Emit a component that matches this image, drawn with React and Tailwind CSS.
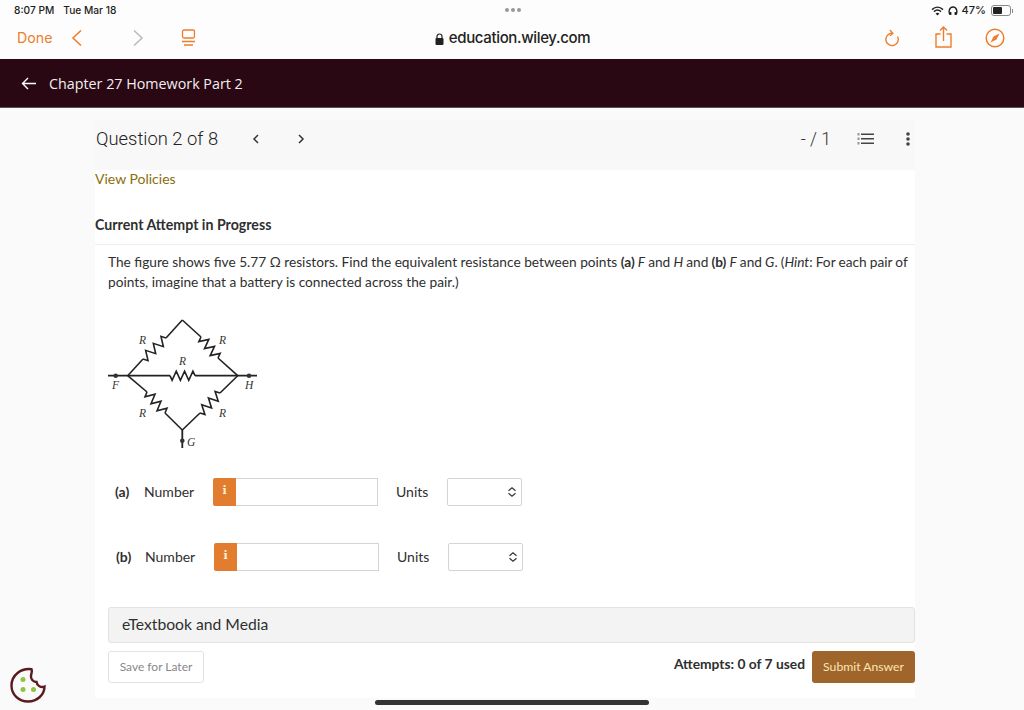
import React from "react";

const lato = "font-['Lato','Open_Sans',sans-serif]";

function Circuit() {
  const r = (x1, y1, x2, y2) => {
    const dx = x2 - x1, dy = y2 - y1;
    const len = Math.hypot(dx, dy);
    const ux = dx / len, uy = dy / len, nx = -uy, ny = ux;
    const n = 6, a = 4.6;
    let d = `M${x1} ${y1}`;
    for (let i = 0; i < n; i++) {
      const t = ((i + 0.5) / n) * len;
      const s = i % 2 ? -a : a;
      d += ` L${x1 + ux * t + nx * s} ${y1 + uy * t + ny * s}`;
    }
    return d + ` L${x2} ${y2}`;
  };
  const lbl = "font-['Liberation_Serif',serif] italic";
  return (
    <svg width="170" height="145" viewBox="0 0 170 145" fill="none" stroke="#222" strokeWidth="1.6" strokeLinejoin="miter">
      <path d="M8 65.7H70" strokeWidth="1.8" />
      <path d="M95 65.7H157" strokeWidth="1.8" />
      <path d={r(70, 65.7, 95, 65.7)} />
      <path d="M27.7 65.7L43 49" /><path d={r(43, 49, 66, 28)} /><path d="M66 28L82.3 10" />
      <path d="M82.3 10L101 27" /><path d={r(101, 27, 118, 48)} /><path d="M118 48L137.7 65.7" />
      <path d="M27.7 65.7L47 82" /><path d={r(47, 82, 65, 103)} /><path d="M65 103L82.3 120" />
      <path d="M82.3 120L100 103" /><path d={r(100, 103, 120, 83)} /><path d="M120 83L137.7 65.7" />
      <path d="M82.3 120V138" strokeWidth="1.8" />
      <g fill="#333" stroke="none">
        <circle cx="15.7" cy="65.7" r="2.3" />
        <circle cx="149" cy="65.7" r="2.3" />
        <circle cx="82.3" cy="130.7" r="2.3" />
        <g fontSize="11.5" className={lbl}>
          <text x="39" y="34">R</text>
          <text x="119" y="34">R</text>
          <text x="79" y="55">R</text>
          <text x="39" y="107">R</text>
          <text x="119" y="107">R</text>
          <text x="12" y="79">F</text>
          <text x="145" y="79">H</text>
          <text x="87" y="136">G</text>
        </g>
      </g>
    </svg>
  );
}

function AnswerRow({ label, offset }) {
  return (
    <div className={`flex items-center h-[28px] ${offset ? "pl-[20px]" : "pl-[19px]"} text-[14px] text-[#2f2f2f]`}>
      <span className="w-[30px] pl-[1px] pb-[2px] font-bold">{label}</span>
      <span className="w-[69px] pb-[2px]">Number</span>
      <span className="w-[23px] h-[28px] bg-[#e27d2f] rounded-l-[2px] flex items-center justify-center pb-[2px] text-[#fdf3d8] text-[11px] font-bold font-['DejaVu_Serif',serif]">i</span>
      <span className="w-[142px] h-[28px] border border-[#d4d4d4] border-l-0 bg-white" />
      <span className="ml-[18px] w-[51px] pb-[2px]">Units</span>
      <span className="w-[75px] h-[28px] border border-[#d4d4d4] rounded-[2px] bg-white flex items-center justify-end pr-[3px]">
        <svg width="12" height="12" viewBox="0 0 12 12" fill="none" stroke="#333" strokeWidth="1.2">
          <path d="M2.500 4.700L6 1.800l3.500 2.900M2.500 7.300L6 10.200l3.500-2.900" />
        </svg>
      </span>
    </div>
  );
}

export default function App() {
  const or = "#ee7d2d";
  return (
    <div className="w-[1024px] h-[710px] bg-[#fafafa] overflow-hidden relative flex flex-col">
      {/* Browser chrome */}
      <div className="h-[59px] bg-[#fdfdfd] relative shrink-0">
        <div className="h-[20px] flex items-center justify-between pl-[14px] pr-[11px] pt-[1px] text-[10.2px] font-medium text-[#222] font-['Inter',sans-serif]">
          <div className="flex gap-[9px]"><span>8:07 PM</span><span>Tue Mar 18</span></div>
          <div className="flex items-center gap-[4px] text-[11px]">
            <svg width="13" height="10" viewBox="0 0 13 10" fill="none" stroke="#222">
              <path d="M1 3.600C4.300.5 8.700.5 12 3.600" strokeWidth="1.500" />
              <path d="M3 5.600c2.200-2 4.800-2 7 0" strokeWidth="1.500" />
              <path d="M6.500 9.500L4.600 7.400c1.200-.9 2.600-.9 3.800 0z" fill="#222" stroke="none" />
            </svg>
            <svg width="10" height="10" viewBox="0 0 10 10" fill="none" stroke="#222" strokeWidth="1.400">
              <path d="M2 8.500C.5 6.500.8 1 5 1s4.500 5.500 3 7.500" />
              <path d="M2.500 6v3M7.500 6v3" strokeWidth="1.800" />
            </svg>
            <span>47%</span>
            <span className="flex items-center ml-[1px]">
              <span className="w-[20px] h-[11px] rounded-[3px] border border-[#888] p-[1px] flex">
                <span className="w-[9px] h-full bg-[#222] rounded-[1px]" />
              </span>
              <span className="w-[1px] h-[4px] bg-[#888] ml-[1px]" />
            </span>
          </div>
        </div>
        <div className="absolute left-[505px] top-[8px] flex gap-[2px]">
          <span className="w-[4px] h-[4px] rounded-full bg-[#999]" />
          <span className="w-[4px] h-[4px] rounded-full bg-[#999]" />
          <span className="w-[4px] h-[4px] rounded-full bg-[#999]" />
        </div>
        <div className="h-[37px] flex items-center relative pb-[1px]">
          <span className="ml-[17px] text-[14.2px] text-[#ee7d2d] font-['Inter',sans-serif] w-[54px]">Done</span>
          <svg width="11" height="18" viewBox="0 0 11 18" fill="none" stroke={or} strokeWidth="1.600"><path d="M10 1.500L2 9l8 7.500" /></svg>
          <svg className="ml-[51px]" width="11" height="18" viewBox="0 0 11 18" fill="none" stroke="#bbb" strokeWidth="1.600"><path d="M1 1.500L9 9l-8 7.500" /></svg>
          <svg className="ml-[37px]" width="15" height="18" viewBox="0 0 15 18" fill="none" stroke={or} strokeWidth="1.300">
            <rect x="1.500" y="1" width="12" height="8" rx="1.500" /><path d="M1 12.500h13M3 16h9" />
          </svg>
          <div className="absolute left-0 right-0 top-0 h-[37px] flex items-center justify-center text-[15px] font-medium text-[#222] font-['Inter',sans-serif] pl-[1px]">
            <svg className="mr-[5px]" width="9" height="12" viewBox="0 0 9 12" fill="#222"><rect x="0.500" y="5" width="8" height="7" rx="1" /><path d="M2 5V3.500a2.500 2.500 0 015 0V5" fill="none" stroke="#222" strokeWidth="1.200" /></svg>
            <span className="tracking-[-0.35px]">education.wiley.com</span>
          </div>
          <svg className="absolute left-[884px] top-[9px]" width="17" height="19" viewBox="0 0 17 19" fill="none" stroke={or} strokeWidth="1.400">
            <path d="M13.600 7.500a6.200 6.200 0 11-6.800-3.200h1.700" /><path d="M5.800 1l3.200 3.300-3 2.700" strokeWidth="1.200" />
          </svg>
          <svg className="absolute left-[935px] top-[6px]" width="17" height="22" viewBox="0 0 17 22" fill="none" stroke={or} strokeWidth="1.400">
            <path d="M5.500 8H1v13h15V8h-4.500M8.500 15V1.500M5 4.500l3.500-3.500 3.500 3.500" />
          </svg>
          <svg className="absolute left-[985px] top-[8px]" width="20" height="20" viewBox="0 0 20 20" fill="none">
            <circle cx="10" cy="10" r="8.800" stroke={or} strokeWidth="1.500" />
            <path d="M14.500 5.500L11.500 11.500 5.500 14.500 8.500 8.500z" fill={or} />
          </svg>
        </div>
      </div>

      {/* App bar */}
      <div className="h-[49px] bg-[#290813] border-b border-[#555] shrink-0 flex items-center pl-[21px] pt-[1px] text-[#f3eeee] text-[14.3px] font-['Open_Sans',sans-serif]">
        <svg width="15" height="13" viewBox="0 0 15 13" fill="none" stroke="#fff" strokeWidth="1.400"><path d="M15 6.500H1.500M7 1L1.500 6.500 7 12" /></svg>
        <span className="ml-[13px]">Chapter 27 Homework Part 2</span>
      </div>

      {/* Card */}
      <div className={`mt-[12px] ml-[95px] w-[820px] ${lato}`}>
        <div className="h-[50px] bg-[#f8f8f8] flex items-center pb-[12px] text-[#333]">
          <span className="ml-[1px] text-[18.4px] font-['Roboto',sans-serif] font-light text-[#222]">Question 2 of 8</span>
          <svg className="ml-[34px]" width="8" height="12" viewBox="0 0 8 12" fill="none" stroke="#333" strokeWidth="1.500"><path d="M6 2L2 6l4 4" /></svg>
          <svg className="ml-[37px]" width="8" height="12" viewBox="0 0 8 12" fill="none" stroke="#333" strokeWidth="1.500"><path d="M2 2l4 4-4 4" /></svg>
          <span className="ml-auto text-[17.5px] font-['Roboto',sans-serif] font-light mr-[26px]">- / 1</span>
          <svg className="mr-[32px]" width="17" height="14" viewBox="0 0 17 14" fill="#444">
            <rect x="4" y="1.500" width="13" height="1.500" /><rect x="4" y="6" width="13" height="1.500" /><rect x="4" y="10.500" width="13" height="1.500" />
            <rect x="0.500" y="1" width="2" height="2.500" opacity=".55" /><rect x="0.500" y="5.500" width="2" height="2.500" opacity=".55" /><rect x="0.500" y="10" width="2" height="2.500" opacity=".55" />
          </svg>
          <svg className="mr-[5px]" width="4" height="14" viewBox="0 0 4 14" fill="#444"><circle cx="2" cy="2" r="1.800" /><circle cx="2" cy="7" r="1.800" /><circle cx="2" cy="12" r="1.800" /></svg>
        </div>
        <div className="h-[528px] bg-white flex flex-col">
          <div className="-mt-[1px] text-[14px] leading-[20px] text-[#8a6d0b]">View Policies</div>
          <div className="mt-[26px] text-[14.2px] font-bold leading-[20px] text-[#2f2f2f] h-[30px] border-b border-[#eee]">Current Attempt in Progress</div>
          <div className="pl-[13px] mt-[7px] text-[13.7px] leading-[20px] text-[#2f2f2f]">
            The figure shows five 5.77 Ω resistors. Find the equivalent resistance between points <span className="[word-spacing:-0.4px]"><b>(a)</b> <i>F</i> and <i>H</i> and <b>(b)</b> <i>F</i> and <i>G</i>. (<i>Hint</i>: For each pair of</span> points, imagine that a battery is connected across the pair.)
          </div>
          <div className="ml-[5px] mt-[18px] h-[145px]"><Circuit /></div>
          <div className="mt-[23px]"><AnswerRow label="(a)" /></div>
          <div className="mt-[37px]"><AnswerRow label="(b)" offset /></div>
          <div className="mt-[36px] ml-[13px] h-[36px] bg-[#f3f3f3] border border-[#e2e2e2] rounded-[3px] flex items-center pl-[13px] text-[15.7px] text-[#2f2f2f]">eTextbook and Media</div>
          <div className="mt-[8px] ml-[13px] flex items-start">
            <span className="w-[96px] h-[32px] border border-[#e2e2e2] rounded-[3px] flex items-center justify-center text-[12px] text-[#888] bg-white">Save for Later</span>
            <span className="ml-auto mr-[7px] mt-[3px] text-[13.8px] font-bold leading-[20px] text-[#2f2f2f]">Attempts: 0 of 7 used</span>
            <span className="w-[103px] h-[32px] bg-[#9f652b] rounded-[3px] flex items-center justify-center text-[12.2px] text-[#fce6b5]">Submit Answer</span>
          </div>
        </div>
      </div>

      {/* Cookie */}
      <svg className="absolute left-[10px] top-[667px]" width="36" height="36" viewBox="0 0 36 36" fill="none">
        <path d="M21.500 2.200C11 1 1.500 8 1.500 18.500 1.500 27.500 8.500 34.500 18 34.500 27.500 34.500 34.500 27.500 34.500 19.500 31 21 27 19 26.500 15 23 15 20.500 12 21 8.500 21.500 6 22.500 4 21.500 2.200z" stroke="#5c1a1f" strokeWidth="2.400" />
        <circle cx="13" cy="12.500" r="2.500" fill="#8cc63f" /><circle cx="13" cy="22.500" r="2.500" fill="#8cc63f" /><circle cx="23.500" cy="22.500" r="2.500" fill="#8cc63f" />
      </svg>
      {/* Home indicator */}
      <div className="absolute left-[375px] top-[700px] w-[274px] h-[5px] rounded-full bg-[#333]" />
    </div>
  );
}
